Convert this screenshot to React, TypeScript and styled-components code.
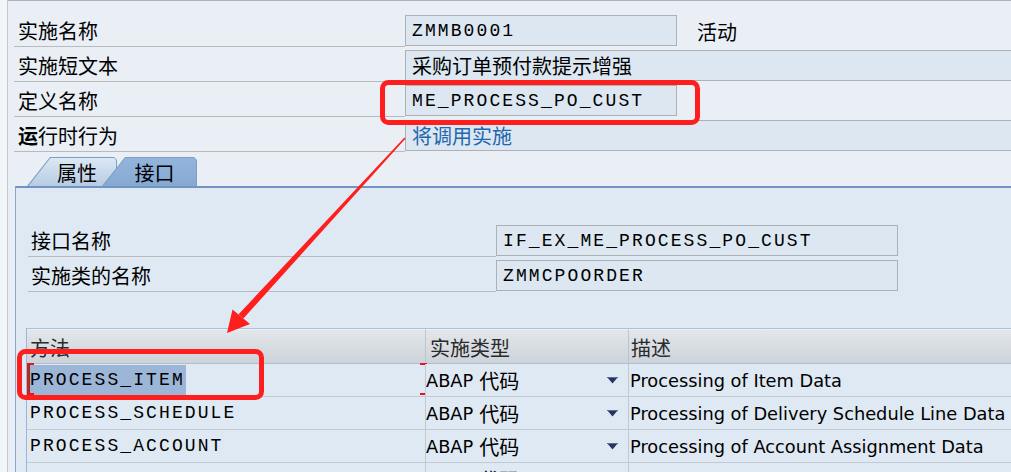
import React from "react";
import styled, { createGlobalStyle } from "styled-components";

const CJK = `"Noto Sans CJK SC", "Noto Sans", sans-serif`;
const MONO = `"Liberation Mono", "Noto Sans CJK SC", monospace`;
const SANS = `"DejaVu Sans", "Noto Sans CJK SC", sans-serif`;

const GlobalStyle = createGlobalStyle`
  html, body { margin: 0; padding: 0; background: #e9eff5; }
  body { font-family: ${CJK}; }
`;

const Page = styled.div`
  position: relative;
  width: 1011px;
  height: 472px;
  overflow: hidden;
  display: flex;
  background: #e9eff5;
`;

const Rail = styled.div`
  flex: none;
  width: 7px;
  background: #f3f6f9;
  border-right: 1px solid #c2cad3;
`;

const Main = styled.div`
  flex: 1;
  min-width: 0;
  display: flex;
  flex-direction: column;
  border-top: 1px solid #a9b3bd;
  padding: 11px 0 0 6px;
`;

const Form = styled.div<{ $indent?: number }>`
  display: flex;
  flex-direction: column;
  margin-left: ${(p) => p.$indent ?? 0}px;
`;

const Row = styled.div`
  display: flex;
  align-items: flex-end;
  height: 35px;
`;

const Label = styled.div<{ $w: number; $pad?: number }>`
  flex: none;
  box-sizing: border-box;
  width: ${(p) => p.$w}px;
  height: 35px;
  border-bottom: 1px solid #b8babc;
  display: flex;
  align-items: center;
  padding: 2px 0 0 ${(p) => p.$pad ?? 4}px;
  font-family: ${CJK};
  font-size: 20px;
  color: #000;
  white-space: nowrap;

  b {
    font-weight: 700;
  }
`;

const Field = styled.div<{ $w?: number; $mono?: boolean; $link?: boolean }>`
  flex: ${(p) => (p.$w ? "none" : "1")};
  width: ${(p) => (p.$w ? `${p.$w}px` : "auto")};
  margin: 0 ${(p) => (p.$w ? 0 : -3)}px 1px 0;
  box-sizing: border-box;
  height: 31px;
  border: 1px solid #adb1b5;
  background: #dce7f2;
  display: flex;
  align-items: center;
  padding-left: 6px;
  white-space: nowrap;
  overflow: hidden;
  font-family: ${(p) => (p.$mono ? MONO : CJK)};
  font-size: ${(p) => (p.$mono ? 18 : 20)}px;
  letter-spacing: ${(p) => (p.$mono ? 2.1 : 0)}px;
  color: ${(p) => (p.$link ? "#1f67ad" : "#000")};
`;

const Extra = styled.div`
  align-self: center;
  margin: 3px 0 0 20px;
  font-family: ${CJK};
  font-size: 20px;
  color: #000;
`;

const TabStrip = styled.div`
  display: flex;
  height: 29px;
  margin-top: 5px;
  padding-left: 13px;
`;

const Tab = styled.div<{ $w: number; $active?: boolean; $overlap?: number }>`
  position: relative;
  z-index: ${(p) => (p.$active ? 2 : 1)};
  width: ${(p) => p.$w}px;
  height: 29px;
  margin-left: ${(p) => -(p.$overlap ?? 0)}px;
  box-sizing: border-box;
  padding: 2px 0 0 10px;
  display: flex;
  align-items: center;
  justify-content: center;
  font-family: ${CJK};
  font-size: 20px;
  color: #000;

  &::before,
  &::after {
    content: "";
    position: absolute;
    z-index: -1;
  }
  &::before {
    inset: 0;
    background: #7f9ec5;
    clip-path: polygon(0 100%, 23px 0, calc(100% - 3px) 0, 100% 3px, 100% 100%);
  }
  &::after {
    inset: 1px 1px 0 1px;
    background: ${(p) =>
      p.$active
        ? "linear-gradient(#93b5dc, #86a9d3)"
        : "linear-gradient(#dce8f4, #b6cce3)"};
    clip-path: polygon(0.5px 100%, 22.5px 0, calc(100% - 2px) 0, 100% 2px, 100% 100%);
  }
`;

const Panel = styled.div`
  flex: 1;
  margin-left: 1px;
  border-top: 2px solid #7194c2;
  border-left: 1px solid #8ca7c8;
  background: #dfe9f3;
  padding: 34px 0 0 10px;
  display: flex;
  flex-direction: column;
`;

const Table = styled.div`
  margin-top: 36px;
  border-top: 1px solid #a7c0dd;
  border-left: 1px solid #9db6d3;
  display: grid;
  grid-template-columns: 398px 203px 1fr;
`;

const HeadCell = styled.div<{ $sep?: boolean; $pad: number }>`
  height: 35px;
  box-sizing: border-box;
  border-top: 1px solid #eef1f4;
  border-bottom: 1px solid #b4bdc7;
  border-left: ${(p) => (p.$sep ? "1px solid #bcc5ce" : "none")};
  background: linear-gradient(#e3e7eb, #cdd3da);
  display: flex;
  align-items: center;
  padding: 2px 0 0 ${(p) => p.$pad}px;
  font-family: ${CJK};
  font-size: 20px;
  color: #2a2a2a;
  white-space: nowrap;
  overflow: hidden;
`;

const Cell = styled.div<{ $sep?: boolean; $pad: number; $mono?: boolean; $focus?: boolean }>`
  position: relative;
  height: 33px;
  box-sizing: border-box;
  border-bottom: 1px solid #c3cad2;
  border-left: ${(p) => (p.$sep ? "1px solid #c0c8d1" : "none")};
  background: #dfe9f3;
  display: flex;
  align-items: center;
  padding-left: ${(p) => p.$pad}px;
  white-space: nowrap;
  overflow: ${(p) => (p.$focus ? "visible" : "hidden")};
  font-family: ${(p) => (p.$mono ? MONO : SANS)};
  font-size: ${(p) => (p.$mono ? 18 : 17.8)}px;
  letter-spacing: ${(p) => (p.$mono ? 2.1 : 0)}px;
  color: #000;

  ${(p) =>
    p.$focus &&
    `
    &::before, &::after {
      content: "";
      position: absolute;
      top: -1px;
      width: 5px;
      height: 28px;
      border: 2px solid #e8141a;
    }
    &::before { left: 0; border-right: none; }
    &::after { right: -2px; border-left: none; }
  `}
`;

const CellText = styled.span<{ $selected?: boolean }>`
  display: inline-flex;
  align-items: center;
  height: 30px;
  padding-right: 1px;
  border-left: 1px solid ${(p) => (p.$selected ? "#5e4b2c" : "transparent")};
  background: ${(p) => (p.$selected ? "#9cb6d8" : "transparent")};
`;

const TypeText = styled.span`
  flex: 1;
  display: flex;
  align-items: center;
  gap: 6px;
`;

const CjkPart = styled.span`
  font-family: ${CJK};
  font-size: 20px;
`;

const DropArrow = styled.svg`
  flex: none;
  margin: 0 10px 0 0;
`;

const Overlay = styled.svg`
  position: absolute;
  left: 0;
  top: 0;
  pointer-events: none;
`;

type Method = { name: string; desc: string; selected?: boolean };

const methods: Method[] = [
  { name: "PROCESS_ITEM", desc: "Processing of Item Data", selected: true },
  { name: "PROCESS_SCHEDULE", desc: "Processing of Delivery Schedule Line Data" },
  { name: "PROCESS_ACCOUNT", desc: "Processing of Account Assignment Data" },
  { name: "CHECK", desc: "Check the Purchase Order" },
];

export default function App() {
  return (
    <>
      <GlobalStyle />
      <Page>
        <Rail />
        <Main>
          <Form>
            <Row>
              <Label $w={391}>实施名称</Label>
              <Field $w={272} $mono>ZMMB0001</Field>
              <Extra>活动</Extra>
            </Row>
            <Row>
              <Label $w={391}>实施短文本</Label>
              <Field>采购订单预付款提示增强</Field>
            </Row>
            <Row>
              <Label $w={391}>定义名称</Label>
              <Field $w={272} $mono>ME_PROCESS_PO_CUST</Field>
            </Row>
            <Row>
              <Label $w={391}>
                <b>运</b>行时行为
              </Label>
              <Field $link>将调用实施</Field>
            </Row>
          </Form>

          <TabStrip>
            <Tab $w={90}>属性</Tab>
            <Tab $w={95} $overlap={15} $active>
              接口
            </Tab>
          </TabStrip>

          <Panel>
            <Form $indent={2}>
              <Row>
                <Label $w={468} $pad={3}>接口名称</Label>
                <Field $w={402} $mono>IF_EX_ME_PROCESS_PO_CUST</Field>
              </Row>
              <Row>
                <Label $w={468} $pad={3}>实施类的名称</Label>
                <Field $w={402} $mono>ZMMCPOORDER</Field>
              </Row>
            </Form>

            <Table>
              <HeadCell $pad={3}>方法</HeadCell>
              <HeadCell $sep $pad={4}>实施类型</HeadCell>
              <HeadCell $sep $pad={2}>描述</HeadCell>
              {methods.map((m) => (
                <React.Fragment key={m.name}>
                  <Cell $pad={2} $mono $focus={m.selected}>
                    <CellText $selected={m.selected}>{m.name}</CellText>
                  </Cell>
                  <Cell $sep $pad={0}>
                    <TypeText>
                      ABAP <CjkPart>代码</CjkPart>
                    </TypeText>
                    <DropArrow width="11" height="7" viewBox="0 0 11 7">
                      <polygon points="0,0 11,0 5.5,6.5" fill="#243463" />
                      <line x1="0" y1="0.5" x2="11" y2="0.5" stroke="#5c6c94" strokeWidth="1" />
                    </DropArrow>
                  </Cell>
                  <Cell $sep $pad={1}>
                    {m.desc}
                  </Cell>
                </React.Fragment>
              ))}
            </Table>
          </Panel>
        </Main>

        <Overlay width="1011" height="472" viewBox="0 0 1011 472">
          <rect x="382.5" y="82.5" width="315" height="40" rx="6" fill="none" stroke="#fe1e1e" strokeWidth="5" />
          <rect x="19.5" y="351.5" width="242" height="46" rx="6" fill="none" stroke="#fe1e1e" strokeWidth="5" />
          <polygon points="405.6,138.5 404.4,137.5 238.6,314.2 243.4,318.6" fill="#fe1e1e" />
          <polygon points="227,333 232.5,309.5 250,324" fill="#fe1e1e" />
        </Overlay>
      </Page>
    </>
  );
}
